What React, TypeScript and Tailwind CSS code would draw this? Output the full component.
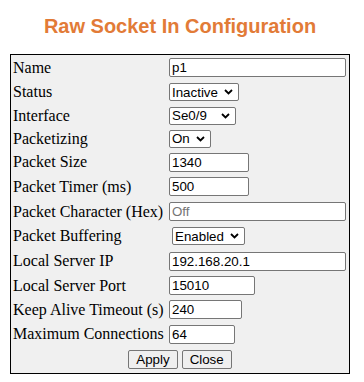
import { useState } from "react";

type Field = {
  label: string;
  kind: "text" | "select";
  value: string;
  options?: string[];
  placeholder?: string;
  width: string;
  rowH: string;
  extra?: string;
};

const fields: Field[] = [
  { label: "Name", kind: "text", value: "p1", width: "w-[177px]", rowH: "h-[25px]" },
  { label: "Status", kind: "select", value: "Inactive", options: ["Inactive", "Active"], width: "w-[70px]", rowH: "h-[24px]" },
  { label: "Interface", kind: "select", value: "Se0/9", options: ["Se0/9", "Se0/10"], width: "w-[67px]", rowH: "h-[23px]" },
  { label: "Packetizing", kind: "select", value: "On", options: ["On", "Off"], width: "w-[42px]", rowH: "h-[23px]" },
  { label: "Packet Size", kind: "text", value: "1340", width: "w-[80px]", rowH: "h-[24px]" },
  { label: "Packet Timer (ms)", kind: "text", value: "500", width: "w-[80px]", rowH: "h-[25px]" },
  { label: "Packet Character (Hex)", kind: "text", value: "", placeholder: "Off", width: "w-[177px]", rowH: "h-[25px]" },
  { label: "Packet Buffering", kind: "select", value: "Enabled", options: ["Enabled", "Disabled"], width: "w-[73px]", rowH: "h-[24px]", extra: "ml-[3px]" },
  { label: "Local Server IP", kind: "text", value: "192.168.20.1", width: "w-[177px]", rowH: "h-[26px]" },
  { label: "Local Server Port", kind: "text", value: "15010", width: "w-[86px]", rowH: "h-[23px]" },
  { label: "Keep Alive Timeout (s)", kind: "text", value: "240", width: "w-[73px]", rowH: "h-[25px]" },
  { label: "Maximum Connections", kind: "text", value: "64", width: "w-[66px]", rowH: "h-[24px]" },
];

function Chevron() {
  return (
    <svg width="9" height="6" viewBox="0 0 9 6" className="pointer-events-none absolute right-[6px] top-[6px]">
      <path d="M1 1 L4.5 4.5 L8 1" fill="none" stroke="#000" strokeWidth="1.8" />
    </svg>
  );
}

export default function App() {
  const [values, setValues] = useState<Record<string, string>>(
    Object.fromEntries(fields.map((f) => [f.label, f.value]))
  );

  const update = (label: string, v: string) => setValues((prev) => ({ ...prev, [label]: v }));

  return (
    <div className="min-h-screen bg-white">
      <div className="ml-[10px] w-[340px]">
        <h1 className="mt-[15px] text-center text-[20px] leading-[23px] font-bold text-[#e27b37] font-['Liberation_Sans',Arial,sans-serif]">
          Raw Socket In Configuration
        </h1>

        <div className="mt-[16px] border border-black bg-[#f0f0f0] font-['Liberation_Serif','Times_New_Roman',serif] text-[16px] leading-[18px] text-black">
          {fields.map((f) => (
            <div key={f.label} className={`grid grid-cols-[156px_1fr] items-center ${f.rowH}`}>
              <div className="pl-[2px] whitespace-nowrap">{f.label}</div>
              <div className="pl-[2px] flex">
                {f.kind === "text" ? (
                  <input
                    type="text"
                    value={values[f.label]}
                    placeholder={f.placeholder}
                    onChange={(e) => update(f.label, e.target.value)}
                    className={`${f.width} h-[19px] rounded-[2px] border border-[#767676] bg-white px-[2px] text-[13.33px] leading-[15px] text-black font-['Liberation_Sans',Arial,sans-serif] placeholder:text-[#757575] outline-none`}
                  />
                ) : (
                  <div className={`relative ${f.width} ${f.extra ?? ""}`}>
                    <select
                      value={values[f.label]}
                      onChange={(e) => update(f.label, e.target.value)}
                      className="block w-full h-[18px] appearance-none rounded-[2px] border border-[#767676] bg-white pl-[2px] text-[13.33px] leading-[15px] text-black font-['Liberation_Sans',Arial,sans-serif] outline-none"
                    >
                      {f.options!.map((o) => (
                        <option key={o}>{o}</option>
                      ))}
                    </select>
                    <Chevron />
                  </div>
                )}
              </div>
            </div>
          ))}
          <div className="flex h-[27px] items-center justify-center gap-[4px]">
            <button className="h-[19px] rounded-[2px] border border-[#767676] bg-[#efefef] px-[7px] text-[13.33px] leading-[15px] text-black font-['Liberation_Sans',Arial,sans-serif]">
              Apply
            </button>
            <button className="h-[19px] rounded-[2px] border border-[#767676] bg-[#efefef] px-[7px] text-[13.33px] leading-[15px] text-black font-['Liberation_Sans',Arial,sans-serif]">
              Close
            </button>
          </div>
        </div>
      </div>
    </div>
  );
}
